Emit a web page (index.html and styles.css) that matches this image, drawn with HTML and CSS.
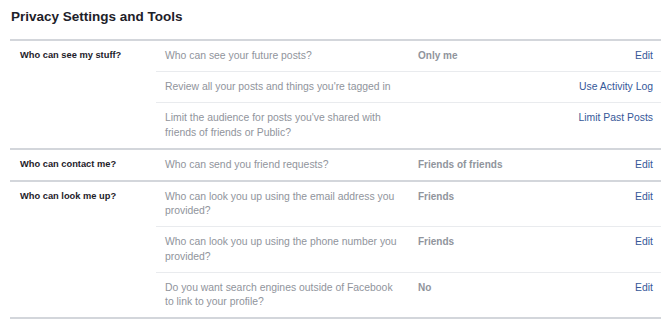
FILE: index.html
```html
<!DOCTYPE html>
<html lang="en">
<head>
<meta charset="utf-8">
<title>Privacy Settings and Tools</title>
<link rel="stylesheet" href="styles.css">
</head>
<body>
<div class="page">
  <h1 class="title">Privacy Settings and Tools</h1>
  <div class="settings">
    <section class="group">
      <div class="group-label">Who can see my stuff?</div>
      <div class="rows">
        <div class="row">
          <div class="question">Who can see your future posts?</div>
          <div class="value">Only me</div>
          <a class="action" href="#">Edit</a>
        </div>
        <div class="row">
          <div class="question">Review all your posts and things you're tagged in</div>
          <div class="value"></div>
          <a class="action" href="#">Use Activity Log</a>
        </div>
        <div class="row">
          <div class="question">Limit the audience for posts you've shared with friends of friends or Public?</div>
          <div class="value"></div>
          <a class="action" href="#">Limit Past Posts</a>
        </div>
      </div>
    </section>
    <section class="group">
      <div class="group-label">Who can contact me?</div>
      <div class="rows">
        <div class="row">
          <div class="question">Who can send you friend requests?</div>
          <div class="value">Friends of friends</div>
          <a class="action" href="#">Edit</a>
        </div>
      </div>
    </section>
    <section class="group">
      <div class="group-label">Who can look me up?</div>
      <div class="rows">
        <div class="row">
          <div class="question">Who can look you up using the email address you provided?</div>
          <div class="value">Friends</div>
          <a class="action" href="#">Edit</a>
        </div>
        <div class="row">
          <div class="question">Who can look you up using the phone number you provided?</div>
          <div class="value">Friends</div>
          <a class="action" href="#">Edit</a>
        </div>
        <div class="row">
          <div class="question">Do you want search engines outside of Facebook to link to your profile?</div>
          <div class="value">No</div>
          <a class="action" href="#">Edit</a>
        </div>
      </div>
    </section>
  </div>
</div>
</body>
</html>
```

FILE: styles.css
```css
* { box-sizing: border-box; }

html, body {
  margin: 0;
  padding: 0;
  background: #ffffff;
}

body {
  font-family: "Liberation Sans", Arial, Helvetica, sans-serif;
  color: #1d2129;
}

.page {
  width: 670px;
  padding: 8px 9px 0 10px;
}

.title {
  margin: 0 0 14px 1px;
  font-size: 13.5px;
  line-height: 17px;
  font-weight: bold;
  color: #1d2129;
}

.settings {
  border-bottom: 2px solid #d3d6db;
}

.group {
  display: grid;
  grid-template-columns: 146px 1fr;
  border-top: 2px solid #d3d6db;
}

.group-label {
  padding: 7px 0 0 10px;
  font-size: 9.3px;
  line-height: 14.5px;
  font-weight: bold;
  color: #1d2129;
}

.row {
  display: grid;
  grid-template-columns: 262px 1fr auto;
  padding: 8px 8px 7.5px 0;
  font-size: 10.4px;
  line-height: 14.5px;
  border-top: 1px solid #e9ebee;
}

.row:first-child {
  border-top: none;
}

.question {
  padding: 0 19px 0 9px;
  color: #90949c;
}

.value {
  font-weight: bold;
  font-size: 10px;
  color: #90949c;
}

.action {
  color: #365899;
  text-decoration: none;
  white-space: nowrap;
}
```
